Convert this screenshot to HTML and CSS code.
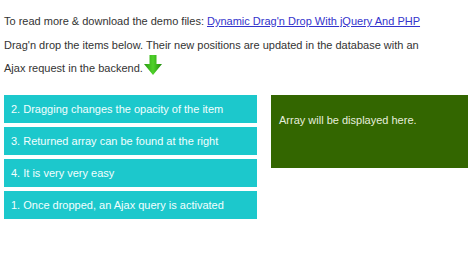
FILE: index.html
```html
<!DOCTYPE html>
<html>
<head>
<meta charset="utf-8">
<link rel="stylesheet" href="styles.css">
</head>
<body>
<div class="page">
  <p class="intro">To read more &amp; download the demo files: <a href="#">Dynamic Drag'n Drop With jQuery And PHP</a></p>
  <p class="desc">Drag'n drop the items below. Their new positions are updated in the database with an Ajax request in the backend. <svg class="arrow" width="18" height="20" viewBox="0 0 18 20"><defs><linearGradient id="g" x1="0" y1="0" x2="1" y2="0"><stop offset="0" stop-color="#2a9a12"/><stop offset="0.5" stop-color="#4fd22a"/><stop offset="1" stop-color="#1f8a0c"/></linearGradient></defs><path d="M5.5 0 H12.5 V9 H18 L9 20 L0 9 H5.5 Z" fill="url(#g)"/></svg></p>
  <div class="demo">
    <ul class="list">
      <li class="item">2. Dragging changes the opacity of the item</li>
      <li class="item">3. Returned array can be found at the right</li>
      <li class="item">4. It is very very easy</li>
      <li class="item">1. Once dropped, an Ajax query is activated</li>
    </ul>
    <div class="response">Array will be displayed here.</div>
  </div>
</div>
</body>
</html>
```
FILE: styles.css
```css
html, body {
  margin: 0;
  padding: 0;
  background: #ffffff;
}
.page {
  padding: 0 4px;
  font-family: "Liberation Sans", Arial, sans-serif;
  font-size: 11px;
  color: #333333;
}
.intro {
  margin: 14px 0 0 0;
  line-height: 14px;
}
.intro a {
  color: #3333cc;
  text-decoration: underline;
}
.desc {
  margin: 7px 0 0 0;
  line-height: 20px;
  width: 420px;
}
.arrow {
  vertical-align: -3px;
  margin-left: -2px;
}
.demo {
  display: flex;
  gap: 14px;
  margin-top: 17px;
  align-items: flex-start;
}
.list {
  list-style: none;
  margin: 0;
  padding: 0;
  width: 253px;
  display: flex;
  flex-direction: column;
  gap: 4px;
}
.item {
  background: #1cc8cc;
  color: #f2ffff;
  height: 28px;
  line-height: 28px;
  padding: 0 7px;
}
.response {
  width: 181px;
  height: 73px;
  background: #336600;
  color: #e6eedd;
  padding: 0 8px;
  box-sizing: content-box;
  line-height: 50px;
}
```
